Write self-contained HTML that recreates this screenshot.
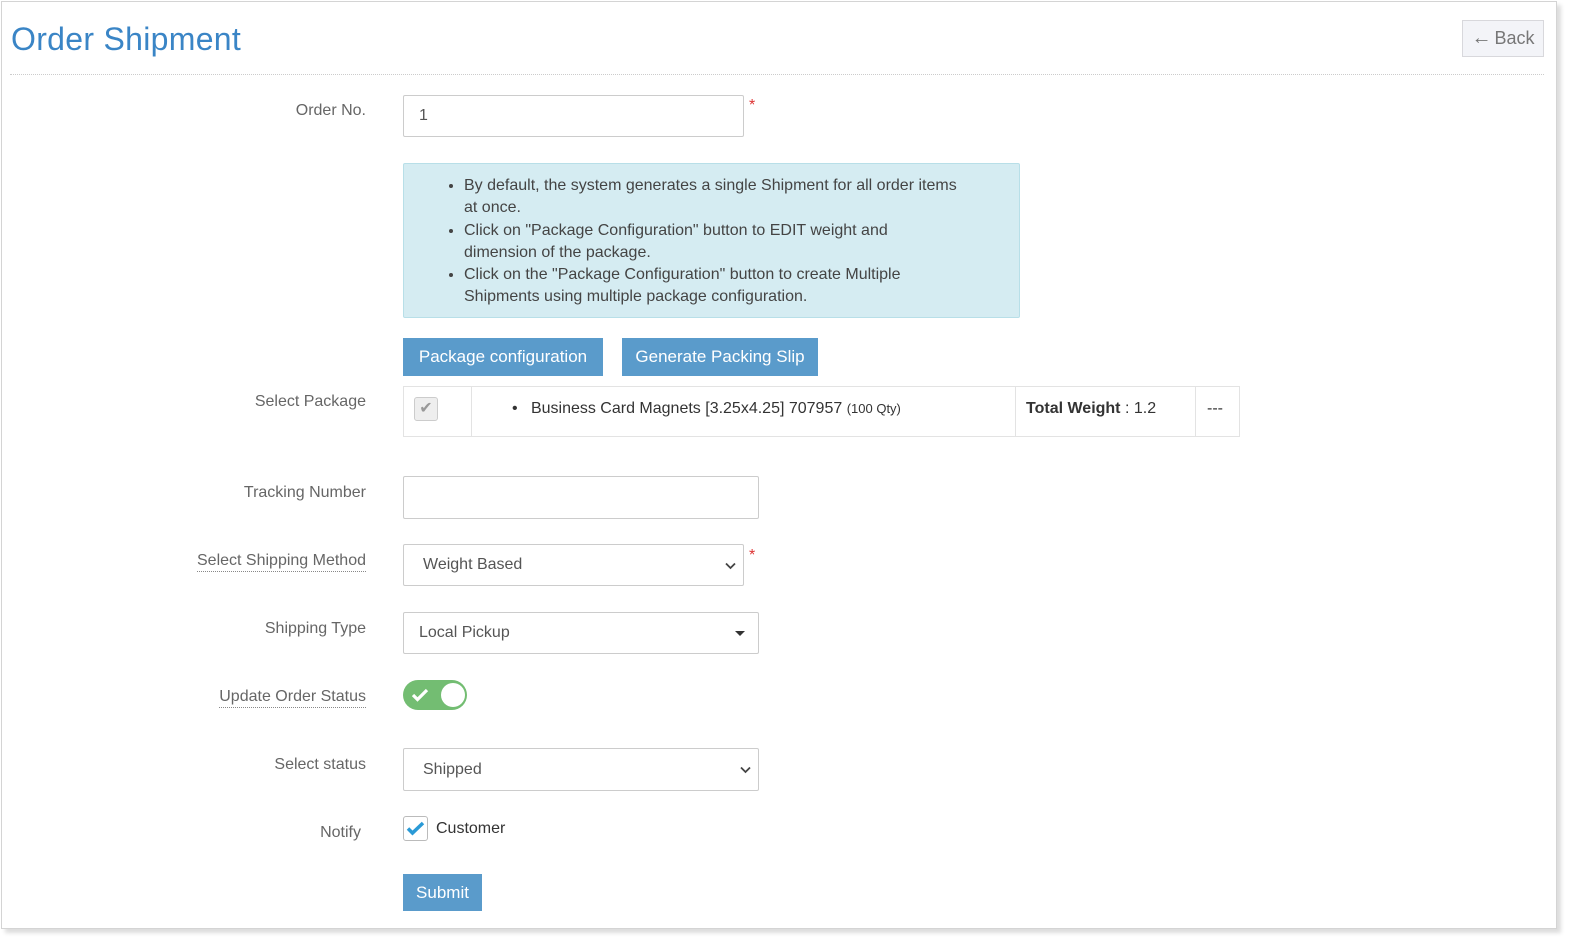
<!DOCTYPE html>
<html><head><meta charset="utf-8"><style>
*{box-sizing:border-box;margin:0;padding:0}
body{width:1587px;height:950px;background:#fff;font-family:"Liberation Sans",sans-serif;color:#333;position:relative;overflow:hidden}
.card{position:absolute;left:1px;top:1px;width:1556px;height:928px;border:1px solid #d4d4d4;background:#fff;box-shadow:4px 4px 4px #ddd}
.a{position:absolute}
.lbl{position:absolute;right:1221px;font-size:16px;color:#666;text-align:right;white-space:nowrap}
.dot{border-bottom:1px dotted #888;padding-bottom:2px}
.inp{position:absolute;border:1px solid #ccc;border-radius:2px;background:#fff;font-size:16px;color:#555;padding-left:15px;display:flex;align-items:center}
.btn{position:absolute;background:#5a9bcb;color:#fff;font-size:17px;display:flex;align-items:center;justify-content:center}
.star{position:absolute;color:#d33;font-size:16px}
li{white-space:nowrap}
</style></head><body>
<div class="card"></div>
<div class="a" style="left:11px;top:21px;font-size:32px;color:#3a85c6;letter-spacing:0.3px">Order Shipment</div>
<div class="a" style="left:1462px;top:20px;width:82px;height:37px;background:#f3f4f8;border:1px solid #d8d8dc;color:#777;font-size:18px;display:flex;align-items:center;justify-content:center"><span style="font-size:20px;margin-right:3px">&#8592;</span>Back</div>
<div class="a" style="left:10px;top:74px;width:1534px;border-top:1px dotted #ccc"></div>

<div class="lbl" style="top:102px">Order No.</div>
<div class="inp" style="left:403px;top:95px;width:341px;height:42px">1</div>
<div class="star" style="left:749px;top:97px">*</div>

<div class="a" style="left:403px;top:163px;width:617px;height:155px;background:#d5ecf2;border:1px solid #b8dfe8;border-radius:2px;font-size:16px;color:#444;line-height:22.3px;padding:11px 10px 0 60px">
<ul><li>By default, the system generates a single Shipment for all order items<br>at once.</li><li>Click on "Package Configuration" button to EDIT weight and<br>dimension of the package.</li><li>Click on the "Package Configuration" button to create Multiple<br>Shipments using multiple package configuration.</li></ul></div>

<div class="btn" style="left:403px;top:338px;width:200px;height:38px">Package configuration</div>
<div class="btn" style="left:622px;top:338px;width:196px;height:38px">Generate Packing Slip</div>

<div class="lbl" style="top:393px">Select Package</div>
<div class="a" style="left:403px;top:386px;width:837px;height:51px;border:1px solid #e3e3e3"></div>
<div class="a" style="left:471px;top:386px;height:51px;border-left:1px solid #e3e3e3"></div>
<div class="a" style="left:1015px;top:386px;height:51px;border-left:1px solid #e3e3e3"></div>
<div class="a" style="left:1195px;top:386px;height:51px;border-left:1px solid #e3e3e3"></div>
<div class="a" style="left:414px;top:397px;width:24px;height:24px;border:1px solid #ccc;border-radius:3px;background:#eee;color:#999;font-size:16px;text-align:center;line-height:22px">&#10004;</div>
<div class="a" style="left:512px;top:400px;font-size:16px;color:#333">&#8226;&nbsp;&nbsp; Business Card Magnets [3.25x4.25] 707957 <span style="font-size:13px">(100 Qty)</span></div>
<div class="a" style="left:1026px;top:400px;font-size:16px;color:#333"><b>Total Weight</b> : 1.2</div>
<div class="a" style="left:1207px;top:400px;font-size:16px">---</div>

<div class="lbl" style="top:484px">Tracking Number</div>
<div class="inp" style="left:403px;top:476px;width:356px;height:43px"></div>

<div class="lbl" style="top:552px"><span class="dot">Select Shipping Method</span></div>
<div class="inp" style="left:403px;top:544px;width:341px;height:42px;padding-left:19px">Weight Based<svg style="position:absolute;right:7px;top:17px" width="11" height="8" viewBox="0 0 11 8"><path d="M1 1.5l4.5 4.5 4.5-4.5" fill="none" stroke="#444" stroke-width="1.8"/></svg></div>
<div class="star" style="left:749px;top:547px">*</div>

<div class="lbl" style="top:620px">Shipping Type</div>
<div class="inp" style="left:403px;top:612px;width:356px;height:42px">Local Pickup<span style="position:absolute;right:13px;top:18px;border:5px solid transparent;border-top-color:#333;border-bottom:0"></span></div>

<div class="lbl" style="top:688px"><span class="dot">Update Order Status</span></div>
<div class="a" style="left:403px;top:680px;width:64px;height:30px;border-radius:15px;background:#73bd72"></div>
<div class="a" style="left:441px;top:683px;width:24px;height:24px;border-radius:50%;background:#fff"></div>
<svg class="a" style="left:411px;top:687px" width="18" height="15" viewBox="0 0 18 15"><path d="M2 8l4.5 4.5L16 3" fill="none" stroke="#fff" stroke-width="3.2"/></svg>

<div class="lbl" style="top:756px">Select status</div>
<div class="inp" style="left:403px;top:748px;width:356px;height:43px;padding-left:19px">Shipped<svg style="position:absolute;right:7px;top:17px" width="11" height="8" viewBox="0 0 11 8"><path d="M1 1.5l4.5 4.5 4.5-4.5" fill="none" stroke="#444" stroke-width="1.8"/></svg></div>

<div class="lbl" style="top:824px;right:1226px">Notify</div>
<div class="a" style="left:403px;top:816px;width:25px;height:25px;border:1px solid #bbb;border-radius:3px"></div>
<svg class="a" style="left:406px;top:820px" width="19" height="16" viewBox="0 0 19 16"><path d="M2 8.5l4.5 4.5L17 3" fill="none" stroke="#2a9ad6" stroke-width="3.5"/></svg>
<div class="a" style="left:436px;top:820px;font-size:16px;color:#333">Customer</div>

<div class="btn" style="left:403px;top:874px;width:79px;height:37px">Submit</div>
</body></html>
